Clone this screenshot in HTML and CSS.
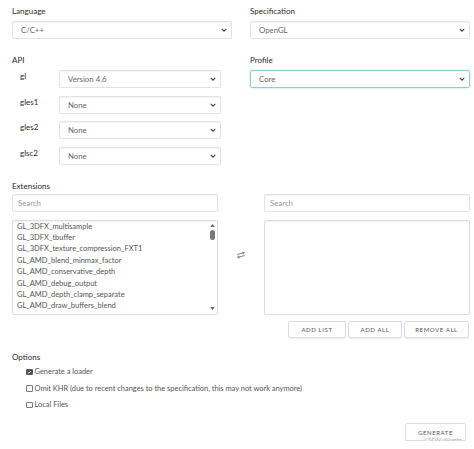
FILE: index.html
```html
<!DOCTYPE html>
<html>
<head>
<meta charset="utf-8">
<link rel="stylesheet" href="styles.css">
</head>
<body>
<div class="page">
  <div class="row two">
    <div class="col">
      <div class="label">Language</div>
      <div class="select"><span>C/C++</span><svg class="chev" viewBox="0 0 8 5"><path d="M1 1l3 3 3-3" /></svg></div>
    </div>
    <div class="col">
      <div class="label">Specification</div>
      <div class="select"><span>OpenGL</span><svg class="chev" viewBox="0 0 8 5"><path d="M1 1l3 3 3-3" /></svg></div>
    </div>
  </div>

  <div class="row two api-row">
    <div class="col">
      <div class="label">API</div>
      <div class="api-list">
        <div class="api"><div class="api-name">gl</div><div class="select sm"><span>Version 4.6</span><svg class="chev" viewBox="0 0 8 5"><path d="M1 1l3 3 3-3" /></svg></div></div>
        <div class="api"><div class="api-name">gles1</div><div class="select sm"><span>None</span><svg class="chev" viewBox="0 0 8 5"><path d="M1 1l3 3 3-3" /></svg></div></div>
        <div class="api"><div class="api-name">gles2</div><div class="select sm"><span>None</span><svg class="chev" viewBox="0 0 8 5"><path d="M1 1l3 3 3-3" /></svg></div></div>
        <div class="api"><div class="api-name">glsc2</div><div class="select sm"><span>None</span><svg class="chev" viewBox="0 0 8 5"><path d="M1 1l3 3 3-3" /></svg></div></div>
      </div>
    </div>
    <div class="col">
      <div class="label">Profile</div>
      <div class="select focus"><span>Core</span><svg class="chev" viewBox="0 0 8 5"><path d="M1 1l3 3 3-3" /></svg></div>
    </div>
  </div>

  <div class="ext">
    <div class="label">Extensions</div>
    <div class="ext-grid">
      <div class="ext-col">
        <div class="input">Search</div>
        <div class="listbox">
          <div class="items">
            <div>GL_3DFX_multisample</div>
            <div>GL_3DFX_tbuffer</div>
            <div>GL_3DFX_texture_compression_FXT1</div>
            <div>GL_AMD_blend_minmax_factor</div>
            <div>GL_AMD_conservative_depth</div>
            <div>GL_AMD_debug_output</div>
            <div>GL_AMD_depth_clamp_separate</div>
            <div>GL_AMD_draw_buffers_blend</div>
            <div>GL_AMD_framebuffer_multisample_advanced</div>
          </div>
          <div class="scroll">
            <svg class="arrow" viewBox="0 0 6 4"><path d="M0 4L3 0 6 4z"/></svg>
            <div class="thumb"></div>
            <div class="spacer"></div>
            <svg class="arrow" viewBox="0 0 6 4"><path d="M0 0L3 4 6 0z"/></svg>
          </div>
        </div>
      </div>
      <div class="swap">
        <svg viewBox="0 0 12 8" width="12" height="8"><g transform="rotate(-15 6 4)" fill="#888" stroke="#888" stroke-width="1"><path d="M2.5 2.5H10" fill="none"/><path d="M10.5 2.5L8 0.8V4.2z" stroke="none"/><path d="M9.5 5.5H2" fill="none"/><path d="M1.5 5.5L4 3.8V7.2z" stroke="none"/></g></svg>
      </div>
      <div class="ext-col">
        <div class="input">Search</div>
        <div class="listbox"></div>
      </div>
    </div>
    <div class="btns">
      <div class="btn">ADD LIST</div>
      <div class="btn w2">ADD ALL</div>
      <div class="btn w3">REMOVE ALL</div>
    </div>
  </div>

  <div class="options">
    <div class="label">Options</div>
    <div class="opt"><span class="cb checked"><svg viewBox="0 0 7 7"><path d="M1.5 3.6l1.4 1.4 2.6-3" /></svg></span>Generate a loader</div>
    <div class="opt"><span class="cb"></span>Omit KHR (due to recent changes to the specification, this may not work anymore)</div>
    <div class="opt"><span class="cb"></span>Local Files</div>
  </div>

  <div class="footer">
    <div class="btn gen">GENERATE</div>
    <div class="wm">CSDN @lianto</div>
  </div>
</div>
</body>
</html>
```

FILE: styles.css
```css
* { box-sizing: border-box; }
html, body { margin: 0; padding: 0; background: #fff; }
body {
  font-family: Lato, "Open Sans", sans-serif;
  font-size: 8px;
  color: #555;
}
.page {
  width: 474px;
  padding: 6px 4px 0 12px;
}
.row.two {
  display: grid;
  grid-template-columns: 220px 220px;
  column-gap: 18px;
}
.label {
  font-size: 8px;
  line-height: 11px;
  height: 11px;
  color: #2a2a2a;
  margin-bottom: 4px;
}
.select {
  height: 18px;
  border: 1px solid #e3e3e3;
  border-radius: 2px;
  display: flex;
  align-items: center;
  justify-content: space-between;
  padding: 0 4px 0 8px;
  color: #666;
  font-size: 7.8px;
  box-shadow: inset 0 1px 1px rgba(0,0,0,0.05);
}
.select.focus {
  border-color: #86d0da;
  box-shadow: 0 0 2px rgba(102,200,215,0.6);
}
.chev {
  width: 6px;
  height: 4px;
  fill: none;
  stroke: #444;
  stroke-width: 1.6;
}
.api-row { margin-top: 16px; }
.api-list {
  display: flex;
  flex-direction: column;
  gap: 7.5px;
}
.api {
  display: flex;
  align-items: flex-start;
}
.api-name {
  width: 47px;
  padding-left: 8px;
  color: #2a2a2a;
  font-size: 8px;
  line-height: 11px;
  margin-top: 1px;
}
.select.sm { width: 162px; }

.ext { margin-top: 16px; width: 458px; }
.ext .label { margin-bottom: 2px; }
.ext-grid {
  display: grid;
  grid-template-columns: 206px 46px 206px;
}
.ext-col { display: flex; flex-direction: column; gap: 8px; }
.input {
  height: 18px;
  border: 1px solid #e3e3e3;
  border-radius: 2px;
  padding: 0 5px;
  line-height: 16px;
  color: #999;
  font-size: 7.8px;
  box-shadow: inset 0 1px 1px rgba(0,0,0,0.05);
}
.listbox {
  height: 95px;
  border: 1px solid #dcdcdc;
  border-radius: 2px;
  display: flex;
  overflow: hidden;
  box-shadow: inset 0 1px 1px rgba(0,0,0,0.05);
}
.items {
  flex: 1;
  padding: 0 0 0 4px;
  color: #555;
  font-size: 7.5px;
  line-height: 11.4px;
  overflow: hidden;
  white-space: nowrap;
}
.scroll {
  width: 10px;
  display: flex;
  flex-direction: column;
  align-items: center;
  padding: 3px 0 4px;
}
.arrow { width: 5px; height: 3px; fill: #666; }
.thumb {
  width: 5px;
  height: 10px;
  background: #777;
  border-radius: 3px;
  margin-top: 3px;
}
.spacer { flex: 1; }
.swap {
  display: flex;
  align-items: flex-start;
  justify-content: center;
  padding-top: 57px;
}
.btns {
  display: flex;
  justify-content: flex-end;
  gap: 2px;
  margin-top: 6px;
  padding-right: 1px;
}
.btn {
  height: 17px;
  width: 58px;
  border: 1px solid #ddd;
  border-radius: 2px;
  display: flex;
  align-items: center;
  justify-content: center;
  font-size: 6px;
  letter-spacing: 0.6px;
  color: #555;
  background: #fff;
  box-shadow: 0 1px 1px rgba(0,0,0,0.06);
}
.btn.w2 { width: 54px; }
.btn.w3 { width: 65px; }

.options { margin-top: 14px; }
.options .label { margin-bottom: 1px; }
.opt {
  display: flex;
  align-items: center;
  height: 16.5px;
  padding-left: 14px;
  color: #555;
  font-size: 7.45px;
}
.cb {
  width: 6.5px;
  height: 6.5px;
  border: 1px solid #777;
  border-radius: 1px;
  margin-right: 2px;
  display: inline-flex;
}
.cb.checked { background: #555; border-color: #555; }
.cb svg { width: 100%; height: 100%; fill: none; stroke: #fff; stroke-width: 1.2; }

.footer {
  position: relative;
  display: flex;
  justify-content: flex-end;
  margin-top: 10px;
  padding-right: 4px;
}
.btn.gen { width: 61px; height: 18px; }
.wm {
  position: absolute;
  right: 8px;
  top: 13px;
  font-size: 6px;
  line-height: 7px;
  color: #aaa;
  background: rgba(255,255,255,0.6);
}
```
